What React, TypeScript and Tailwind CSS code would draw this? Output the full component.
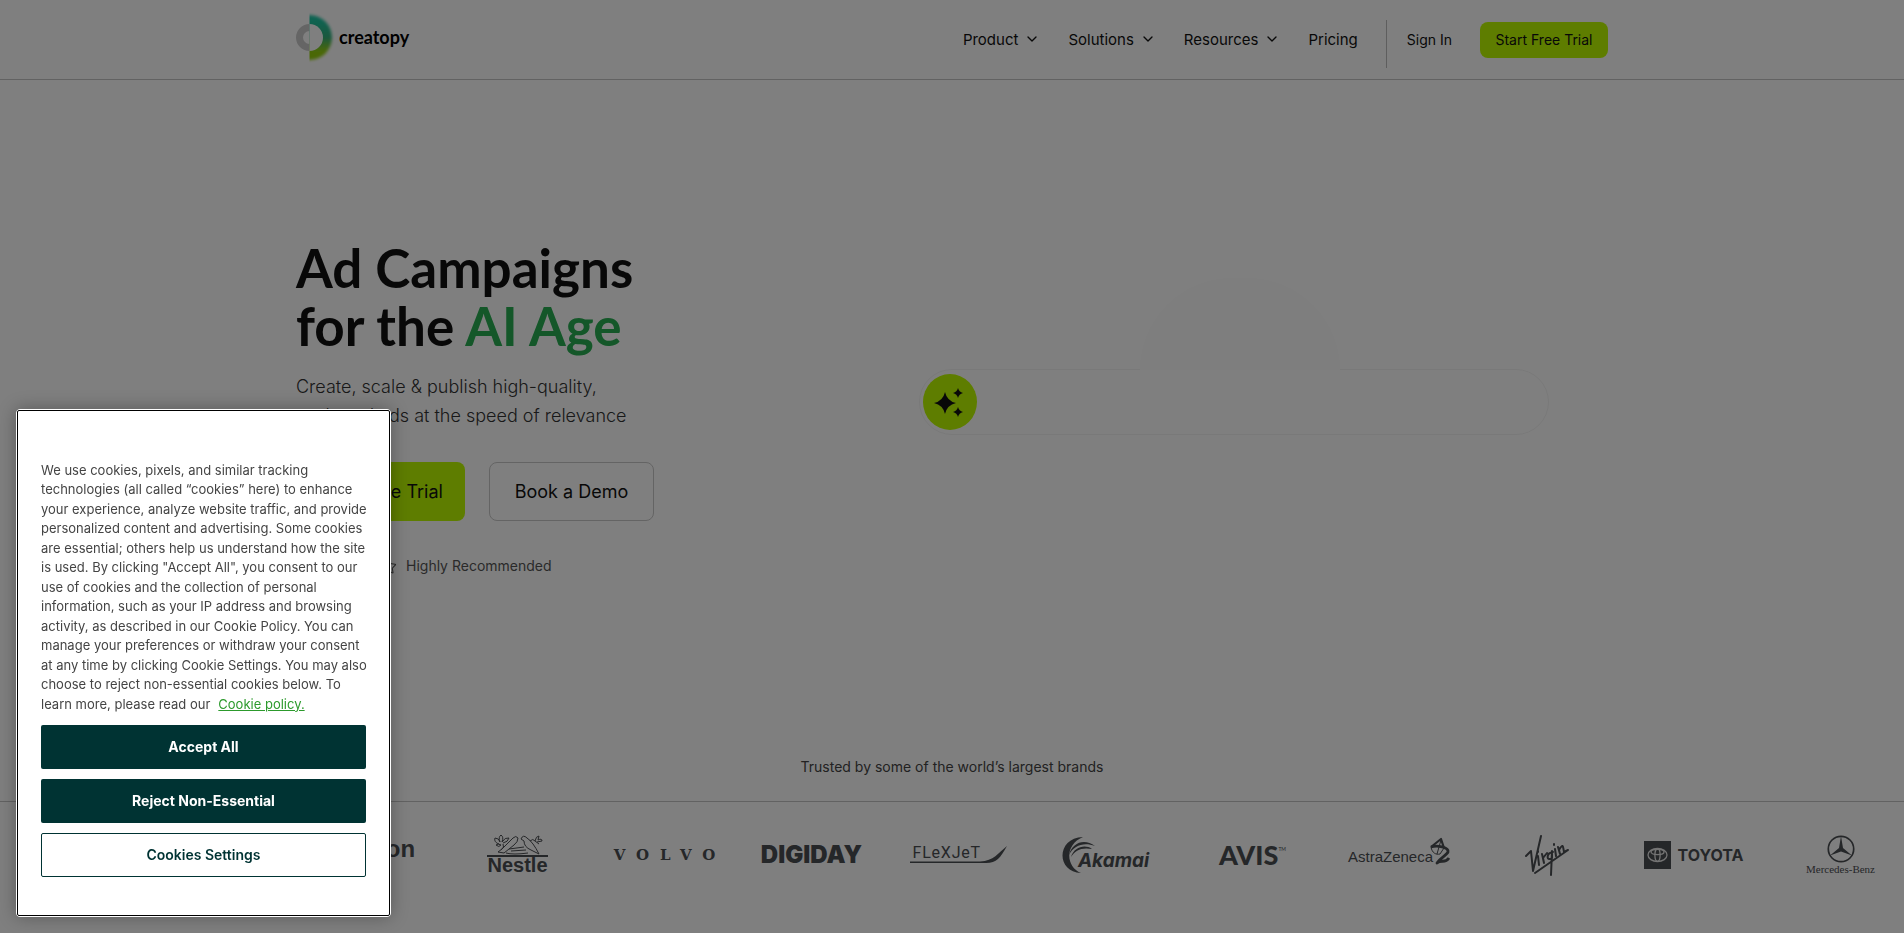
import React from 'react';
import { ChevronDown, Star } from 'lucide-react';

const navItems = [
  { label: 'Product', menu: true },
  { label: 'Solutions', menu: true },
  { label: 'Resources', menu: true },
  { label: 'Pricing', menu: false },
];

const cookieLines = [
  'We use cookies, pixels, and similar tracking',
  'technologies (all called “cookies” here) to enhance',
  'your experience, analyze website traffic, and provide',
  'personalized content and advertising. Some cookies',
  'are essential; others help us understand how the site',
  'is used. By clicking "Accept All", you consent to our',
  'use of cookies and the collection of personal',
  'information, such as your IP address and browsing',
  'activity, as described in our Cookie Policy. You can',
  'manage your preferences or withdraw your consent',
  'at any time by clicking Cookie Settings. You may also',
  'choose to reject non-essential cookies below. To',
];

const CreatopyLogo = () => (
  <a href="#" className="flex items-center" aria-label="creatopy">
    <svg width="43" height="60" viewBox="0 0 43 60" fill="none">
      <defs>
        <linearGradient id="ring" x1="0" y1="0" x2="0" y2="1">
          <stop offset="0.1" stopColor="#1fc7a5" />
          <stop offset="0.5" stopColor="#35b07c" />
          <stop offset="0.8" stopColor="#94d010" />
        </linearGradient>
        <filter id="glow" x="-20%" y="-20%" width="140%" height="140%">
          <feGaussianBlur stdDeviation="1.6" />
        </filter>
        <clipPath id="right-half">
          <path d="M13.5 0H43V60H13.5Z" />
        </clipPath>
      </defs>
      <path d="M13.5 17.5A10 10 0 0 0 13.5 37.5" stroke="#cbcbcb" strokeWidth="7" />
      <g clipPath="url(#right-half)">
        <circle cx="13.5" cy="27.5" r="22.5" fill="url(#ring)" filter="url(#glow)" />
        <circle cx="13.5" cy="27.5" r="13.5" fill="#fff" />
      </g>
    </svg>
    <span className="pb-1.5 font-[Lato] text-lg leading-6 font-bold text-black">creatopy</span>
  </a>
);

const Header = () => (
  <header className="h-20 border-b border-[#c4c4c4]">
    <div className="mx-auto flex h-full w-full max-w-[1312px] items-center justify-between">
      <CreatopyLogo />
      <nav className="flex items-center text-sm text-[#111]">
        {navItems.map((item) => (
          <a key={item.label} href="#" className="mr-7 flex items-center gap-1.5 text-[15px]">
            {item.label}
            {item.menu && <ChevronDown size={16} strokeWidth={2} />}
          </a>
        ))}
        <span className="mt-2 mr-5 h-12 w-px bg-[#bdbdbd]" />
        <a href="#" className="mr-7">Sign In</a>
        <button className="h-9 w-32 rounded-lg bg-[#bcfa00]">Start Free Trial</button>
      </nav>
    </div>
  </header>
);

const PromptBar = () => (
  <div className="relative mt-[130px] mr-[59px] flex h-[66px] w-[630px] items-center rounded-full border border-[#f3f3f3] pl-[3px]">
    <span className="absolute bottom-full left-[220px] h-[92px] w-[200px] rounded-t-full bg-[#fcfcfc]" />
    <svg width="54" height="56" viewBox="0 0 54 56">
      <ellipse cx="27" cy="28" rx="27" ry="28" fill="#bcfa00" />
      <g fill="#111">
        <path d="M22 18Q24 27 33 29Q24 31 22 40Q20 31 11 29Q20 27 22 18Z" />
        <path d="M35 14Q36 18 40 19Q36 20 35 24Q34 20 30 19Q34 18 35 14Z" />
        <path d="M35 33Q36 37 40 38Q36 39 35 43Q34 39 30 38Q34 37 35 33Z" />
      </g>
    </svg>
  </div>
);

const Hero = () => (
  <section className="mx-auto flex w-full max-w-[1312px] justify-between pt-[159px]">
    <div>
      <h1 className="font-[Lato] text-[53px] leading-[58px] font-bold text-[#111]">
        Ad Campaigns
        <br />
        for the <span className="text-[#28ae52]">AI Age</span>
      </h1>
      <p className="mt-[17px] text-lg leading-[29px] font-light text-[#333]">
        Create, scale &amp; publish high-quality,
        <br />
        on-brand ads at the speed of relevance
      </p>
      <div className="mt-8 flex gap-6 text-lg text-[#111]">
        <button className="h-[59px] w-[169px] rounded-lg bg-[#bcfa00]">Start Free Trial</button>
        <button className="h-[59px] w-[165px] rounded-lg border border-[#c8c8c8]">Book a Demo</button>
      </div>
      <div className="mt-[35px] flex items-center gap-[9px] text-sm text-[#555]">
        <span className="flex gap-1">
          {[1, 2, 3, 4, 5].map((n) => (
            <Star key={n} size={17} strokeWidth={1.5} />
          ))}
        </span>
        Highly Recommended
      </div>
    </div>
    <PromptBar />
  </section>
);

const Nestle = () => (
  <div className="flex flex-col items-center pb-1 font-['Liberation_Sans']">
    <svg width="50" height="21" viewBox="0 0 50 21" fill="none" stroke="currentColor" strokeWidth="1" strokeLinejoin="round">
      <path d="M6 10C3 9 1 7 2 4Q6 4 7 8Q5 3 8 1Q11 3 9 8Q12 3 16 4Q15 8 10 9M3 11Q5 9 8 11Q6 14 3 11ZM10 10Q12 13 8 16" />
      <path d="M25 4Q23 1 20 4L9 15L5 18L11 19L21 11Q25 8 25 4ZM13 19Q20 21 35 19M16 15L31 13M18 17L33 16" />
      <path d="M28 5Q30 0 34 4Q40 8 46 20L38 16Q31 13 31 7ZM37 7Q40 4 42 7L46 10M42 7Q43 2 46 2L45 6Q49 4 49 7L44 8" />
    </svg>
    <span className="border-t-2 border-current text-xl leading-4 font-bold">Nestle</span>
  </div>
);

const Flexjet = () => (
  <div className="grid">
    <span className="col-start-1 row-start-1 pb-1 pl-[3px] font-[Roboto] text-base leading-4 tracking-wider">FLeXJeT</span>
    <svg className="col-start-1 row-start-1" width="98" height="20" viewBox="0 0 98 20" fill="currentColor">
      <path d="M0 16.5H70C84 16 88 8 97 1C90 13 87 18 76 18H0Z" />
    </svg>
  </div>
);

const Akamai = () => (
  <div className="flex items-end">
    <svg width="34" height="37" viewBox="0 0 34 37" fill="currentColor">
      <path d="M21 0C-6 1 -6 35 19 36C4 30 2 8 21 0Z" />
      <path d="M7 18C10 5 23 1 33 9C22 5 12 8 7 18Z" />
      <path d="M9 20C12 10 23 7 30 12C20 10 13 13 9 20Z" />
    </svg>
    <span className="-ml-[18px] pb-px text-[19px] leading-6 font-bold italic">Akamai</span>
  </div>
);

const Avis = () => (
  <div className="flex items-start font-[Lato] leading-8">
    <span className="text-[27px] font-black">AVIS</span>
    <span className="text-[5px] leading-5">TM</span>
  </div>
);

const AstraZeneca = () => (
  <div className="flex items-end pb-2">
    <span className="font-['Liberation_Sans'] text-[15px] leading-4">AstraZeneca</span>
    <svg className="-ml-1" width="22" height="28" viewBox="0 0 22 28" fill="none" stroke="currentColor" strokeLinejoin="round">
      <path d="M2 10L12 2L15 11" strokeWidth="2.2" />
      <path d="M2 10C8 8 20 10 19 15C18 18 12 20 8 26C12 22 16 27 20 21" strokeWidth="2.8" />
      <path d="M2 10C3 16 7 18 11 17L15 11M12 3L8 17" strokeWidth="1" />
    </svg>
  </div>
);

const Virgin = () => (
  <svg width="44" height="42" viewBox="0 0 44 42" fill="none" stroke="currentColor" strokeWidth="2" strokeLinecap="round" strokeLinejoin="round">
    <path d="M1 22L6 17L8 37L16 2M13 22L14 31M17 20L19 29L18 24L22 19M28 18C21 19 21 28 27 24L27 17L26 41M30 15L31 22M29 10V11M13 17V18M33 13L35 20L34 16C38 9 38 12 39 18L43 16L10 39" />
  </svg>
);

const Toyota = () => (
  <div className="flex items-center gap-[7px]">
    <svg width="27" height="28" viewBox="0 0 27 28" fill="none">
      <path d="M0 0H27V28H0Z" fill="currentColor" />
      <g stroke="#e8e8e8" strokeWidth="1.3">
        <ellipse cx="13.5" cy="14" rx="9.5" ry="6.5" />
        <ellipse cx="13.5" cy="11" rx="6.5" ry="2.6" />
        <ellipse cx="13.5" cy="14" rx="2.6" ry="6.3" />
      </g>
    </svg>
    <span className="text-base font-bold">TOYOTA</span>
  </div>
);

const Mercedes = () => (
  <div className="flex flex-col items-center">
    <svg width="28" height="28" viewBox="0 0 28 28">
      <circle cx="14" cy="14" r="12.7" fill="none" stroke="currentColor" strokeWidth="1.7" />
      <path d="M14 1L16 13L25 20.5L14 16.5L3 20.5L12 13Z" fill="currentColor" />
    </svg>
    <span className="font-['Liberation_Serif'] text-[11px] leading-3">Mercedes-Benz</span>
  </div>
);

const brands = [
  { name: 'Amazon', logo: <span className="pb-3 font-['Liberation_Sans'] text-2xl font-bold">amazon</span> },
  { name: 'Nestle', logo: <Nestle /> },
  { name: 'Volvo', logo: <span className="pl-[11px] font-['DejaVu_Serif'] text-[15px] font-bold tracking-[11px]">VOLVO</span> },
  { name: 'Digiday', logo: <span className="font-[Inter] text-2xl font-black">DIGIDAY</span> },
  { name: 'Flexjet', logo: <Flexjet /> },
  { name: 'Akamai', logo: <Akamai /> },
  { name: 'Avis', logo: <Avis /> },
  { name: 'AstraZeneca', logo: <AstraZeneca /> },
  { name: 'Virgin', logo: <Virgin /> },
  { name: 'Toyota', logo: <Toyota /> },
  { name: 'Mercedes', logo: <Mercedes /> },
];

const Brands = () => (
  <section className="mt-auto">
    <p className="pb-6 text-center text-sm text-[#444]">Trusted by some of the world’s largest brands</p>
    <ul className="flex h-[132px] items-start overflow-hidden border-t border-[#c4c4c4] pt-[31px] pl-[297px] text-[#4b4e52]">
      {brands.map((brand) => (
        <li key={brand.name} className="flex h-11 w-[147px] shrink-0 items-center justify-center whitespace-nowrap">
          {brand.logo}
        </li>
      ))}
    </ul>
  </section>
);

const CookieDialog = () => (
  <div
    role="dialog"
    aria-label="Cookie consent"
    className="fixed bottom-4 left-4 w-[375px] rounded-sm border border-white bg-white shadow-[0_0_18px_rgba(0,0,0,0.3)]"
  >
    <div className="rounded-xs border border-black px-[23px] pt-[50px] pb-[38px]">
      <p className="text-[13px] leading-normal whitespace-nowrap text-[#444]">
        {cookieLines.map((line) => (
          <React.Fragment key={line}>
            {line}
            <br />
          </React.Fragment>
        ))}
        learn more, please read our
        <a href="#" className="ml-2 text-[#2c9a2c] underline">Cookie policy.</a>
      </p>
      <div className="mt-[11px] flex flex-col gap-[10px] text-sm font-bold">
        <button className="h-11 rounded-xs bg-[#033] text-white">Accept All</button>
        <button className="h-11 rounded-xs bg-[#033] text-white">Reject Non-Essential</button>
        <button className="h-11 rounded-xs border border-[#033] font-semibold text-[#033]">Cookies Settings</button>
      </div>
    </div>
  </div>
);

export default function App() {
  return (
    <div className="font-[Inter,sans-serif]">
      <div className="flex min-h-screen flex-col bg-white">
        <Header />
        <Hero />
        <Brands />
      </div>
      <div className="fixed inset-0 bg-black/50" />
      <CookieDialog />
    </div>
  );
}
